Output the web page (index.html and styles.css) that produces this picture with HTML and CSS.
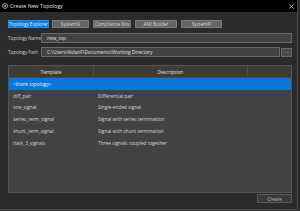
FILE: index.html
```html
<!DOCTYPE html>
<html>
<head>
<meta charset="utf-8">
<link rel="stylesheet" href="styles.css">
</head>
<body>
<div class="window">
  <div class="titlebar">
    <svg class="appicon" width="6" height="6" viewBox="0 0 6 6"><circle cx="3" cy="3" r="2.4" fill="none" stroke="#bbb" stroke-width="0.9"/><circle cx="3" cy="3" r="0.9" fill="#bbb"/></svg>
    <span class="title">Create New Topology</span>
    <svg class="close" width="5" height="5" viewBox="0 0 5 5"><path d="M0.5 0.5L4.5 4.5M4.5 0.5L0.5 4.5" stroke="#ccc" stroke-width="0.9"/></svg>
  </div>
  <div class="tabs">
    <div class="tab active t1">Topology Explorer</div>
    <div class="tab t2">SystemSI</div>
    <div class="tab t3">Compliance Kits</div>
    <div class="tab t4">AMI Builder</div>
    <div class="tab t5">SystemPI</div>
  </div>
  <div class="form">
    <div class="row">
      <span class="label">Topology Name</span>
      <div class="input">new_top</div>
    </div>
    <div class="row">
      <span class="label">Topology Path</span>
      <div class="input">C:\Users\AidanF\Documents\Working Directory</div>
      <div class="browse">...</div>
    </div>
  </div>
  <div class="tablewrap">
    <div class="table">
      <div class="thead">
        <div class="c1 th">Template</div>
        <div class="c2 th">Description</div>
        <div class="c3 th"></div>
      </div>
      <div class="tr sel"><div class="c1">&lt;blank topology&gt;</div><div class="c2"></div><div class="c3"></div></div>
      <div class="tr"><div class="c1">diff_pair</div><div class="c2">Differential pair</div><div class="c3"></div></div>
      <div class="tr"><div class="c1">one_signal</div><div class="c2">Single-ended signal</div><div class="c3"></div></div>
      <div class="tr"><div class="c1">series_term_signal</div><div class="c2">Signal with series termination</div><div class="c3"></div></div>
      <div class="tr"><div class="c1">shunt_term_signal</div><div class="c2">Signal with shunt termination</div><div class="c3"></div></div>
      <div class="tr"><div class="c1">rlatk_3_signals</div><div class="c2">Three signals coupled together</div><div class="c3"></div></div>
    </div>
  </div>
  <div class="footer">
    <div class="btn">Create</div>
  </div>
</div>
</body>
</html>
```
FILE: styles.css
```css
html, body {
  margin: 0;
  padding: 0;
  background: #2a2a2a;
  width: 300px;
  height: 211px;
  overflow: hidden;
}
.window {
  width: 297px;
  height: 209px;
  border-right: 1px solid #4a4a4a;
  border-bottom: 1px solid #4a4a4a;
  background: #2b2b2b;
  font-family: "Open Sans", "Noto Sans", sans-serif;
  font-size: 5px;
  color: #d8d8d8;
  display: flex;
  flex-direction: column;
}
.titlebar {
  height: 12px;
  background: #000;
  display: flex;
  align-items: center;
  padding-left: 2px;
  padding-right: 2px;
}
.appicon { margin-right: 2px; }
.title { font-size: 5.3px; color: #e0e0e0; flex: 1; }
.close { margin-right: 1px; }
.tabs {
  display: flex;
  gap: 4px;
  padding-left: 8px;
  margin-top: 8px;
  height: 8px;
}
.tab {
  background: #666;
  border: 1px solid #7a7a7a;
  box-sizing: border-box;
  display: flex;
  align-items: center;
  justify-content: center;
  color: #dcdcdc;
  font-size: 4.6px;
}
.tab.active { background: #0a78d8; border-color: #2a8ae0; color: #eef; }
.t1 { width: 41px; }
.t2 { width: 37px; margin-left: -1px; }
.t3 { width: 38px; }
.t4 { width: 42px; }
.t5 { width: 41px; }
.form {
  display: flex;
  flex-direction: column;
  gap: 4px;
  margin-top: 5px;
  padding-left: 8px;
  padding-right: 5px;
}
.row {
  display: flex;
  align-items: center;
  height: 10px;
}
.label { width: 33px; font-size: 4.5px; color: #d0d0d0; white-space: nowrap; }
.input {
  flex: 1;
  height: 10px;
  box-sizing: border-box;
  background: #424242;
  border: 1px solid #6a6a6a;
  padding-left: 5px;
  display: flex;
  align-items: center;
  font-size: 4.8px;
  color: #e0e0e0;
  white-space: nowrap;
}
.browse {
  width: 11px;
  height: 9px;
  box-sizing: border-box;
  margin-left: 1px;
  background: #4a4a4a;
  border: 1px solid #6a6a6a;
  display: flex;
  align-items: center;
  justify-content: center;
  color: #bbb;
  font-size: 5px;
  line-height: 5px;
  padding-bottom: 2px;
}
.tablewrap {
  margin-top: 8px;
  padding-left: 8px;
  padding-right: 5px;
  display: flex;
}
.table {
  width: 285px;
  height: 128px;
  box-sizing: border-box;
  background: #424242;
  border: 1px solid #555;
}
.thead, .tr { display: flex; }
.thead { height: 12px; background: #3c3c3c; border-bottom: 1px solid #4c4c4c; box-sizing: border-box; }
.th { display: flex; align-items: center; justify-content: center; font-size: 4.8px; color: #e6e6e6; }
.thead .c1, .thead .c2 { border-right: 1px solid #4e4e4e; }
.c1 { width: 85px; box-sizing: border-box; }
.c2 { width: 154px; box-sizing: border-box; }
.c3 { flex: 1; }
.tr { height: 11.8px; align-items: center; font-size: 4.8px; color: #d6d6d6; white-space: nowrap; }
.tr .c1 { padding-left: 4px; }
.tr .c2 { padding-left: 4px; }
.tr.sel { background: #0a78d8; color: #e8f0ff; }
.footer {
  display: flex;
  justify-content: flex-end;
  padding-right: 5px;
  margin-top: 1px;
}
.btn {
  width: 35px;
  height: 9px;
  box-sizing: border-box;
  background: #3a3a3a;
  border: 1px solid #5a5a5a;
  display: flex;
  align-items: center;
  justify-content: center;
  font-size: 4.6px;
  color: #bdbdbd;
}
```
